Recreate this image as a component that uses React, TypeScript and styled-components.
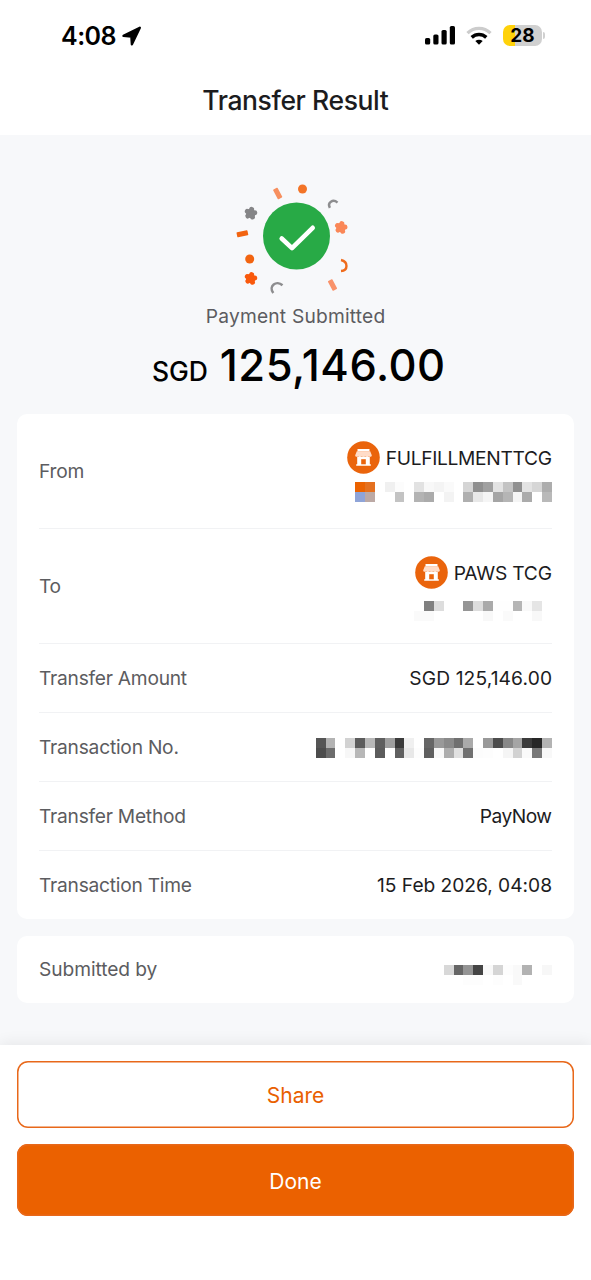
import React from "react";
import styled, { createGlobalStyle } from "styled-components";

const GlobalStyle = createGlobalStyle`
  * { box-sizing: border-box; }
  body { margin: 0; background: #fff; font-family: Inter, "Liberation Sans", sans-serif; }
`;

const Screen = styled.div`
  width: 591px;
  height: 1280px;
  display: flex;
  flex-direction: column;
  background: #f7f8fa;
  color: #1c1c1e;
  overflow: hidden;
`;

const Header = styled.header`
  height: 135px;
  background: #fff;
`;

const StatusBar = styled.div`
  height: 71px;
  padding: 0 46px 0 61px;
  display: flex;
  align-items: center;
  justify-content: space-between;
`;

const StatusGroup = styled.div<{ $gap: number }>`
  display: flex;
  align-items: center;
  gap: ${(p) => p.$gap}px;
`;

const Text = styled.span<{ $size: number; $weight?: number; $spacing?: number; $color?: string }>`
  font-size: ${(p) => p.$size}px;
  font-weight: ${(p) => p.$weight ?? 400};
  letter-spacing: ${(p) => p.$spacing ?? 0}px;
  margin-right: ${(p) => -(p.$spacing ?? 0)}px;
  color: ${(p) => p.$color ?? "#1c1c1e"};
  line-height: 1.2;
  white-space: nowrap;
`;

const Battery = styled.div`
  width: 39px;
  height: 21px;
  padding-top: 1px;
  border-radius: 7px;
  background: linear-gradient(90deg, #ffd20a 0 12px, #d0d0d0 12px);
  display: flex;
  align-items: center;
  justify-content: center;
`;

const BatteryTip = styled.div`
  width: 2px;
  height: 7px;
  border-radius: 0 2px 2px 0;
  background: #d0d0d0;
`;

const TitleBar = styled.div`
  height: 60px;
  display: flex;
  align-items: center;
  justify-content: center;
`;

const Summary = styled.section`
  height: 279px;
  padding-top: 45px;
  display: flex;
  flex-direction: column;
  align-items: center;
`;

const Status = styled.div`
  height: 26px;
  margin-top: 4px;
  display: flex;
  align-items: center;
`;

const Amount = styled.div`
  margin-top: 9px;
  padding-left: 6px;
  display: flex;
  align-items: baseline;
  gap: 12px;
`;

const Card = styled.section`
  margin: 0 17px 17px;
  padding: 0 22px;
  border-radius: 10px;
  background: #fff;
`;

const Row = styled.div<{ $height: number }>`
  height: ${(p) => p.$height}px;
  padding-top: 1px;
  display: flex;
  align-items: center;
  justify-content: space-between;
  & + & { border-top: 1px solid #f1f2f4; }
`;

const Party = styled.div<{ $gap: number }>`
  display: flex;
  flex-direction: column;
  align-items: flex-end;
  padding-top: ${(p) => p.$gap - 8}px;
  gap: ${(p) => p.$gap}px;
`;

const PartyName = styled.div`
  height: 33px;
  display: flex;
  align-items: center;
  gap: 6px;
  & > span { padding-top: 2px; }
`;

const MosaicGrid = styled.div<{ $cols: number; $drop: number }>`
  display: grid;
  grid-template-columns: repeat(${(p) => p.$cols}, 9.85px);
  grid-auto-rows: 10px;
  margin-top: ${(p) => p.$drop}px;
`;

const Cell = styled.i<{ $color: string }>`
  background: ${(p) => p.$color};
`;

const Footer = styled.footer`
  height: 235px;
  margin-top: auto;
  padding: 16px 17px 0;
  display: flex;
  flex-direction: column;
  gap: 16px;
  background: #fff;
  box-shadow: 0 -2px 14px rgba(0, 0, 0, 0.07);
`;

const Button = styled.button<{ $filled?: boolean }>`
  width: 100%;
  height: ${(p) => (p.$filled ? 72 : 67)}px;
  border: 0;
  box-shadow: inset 0 0 0 1.5px #e8681a;
  border-radius: 11px;
  background: ${(p) => (p.$filled ? "#eb6100" : "#fff")};
  font-family: inherit;
  padding: 3px 0 0;
  display: flex;
  align-items: center;
  justify-content: center;
`;

function Mosaic({ rows, drop = 0 }: { rows: string[]; drop?: number }) {
  const cells = rows.map((r) => r.split(" "));
  return (
    <MosaicGrid $cols={cells[0].length} $drop={drop}>
      {cells.flat().map((c, i) => (
        <Cell key={i} $color={c.length === 2 ? `#${c}${c}${c}` : `#${c}`} />
      ))}
    </MosaicGrid>
  );
}

function StoreIcon() {
  return (
    <svg width="33" height="33" viewBox="0 0 33 33">
      <circle cx="16.5" cy="16.5" r="16.3" fill="#ea640c" />
      <path d="M10.500 8h12v2.500h-12z" fill="#fff" />
      <path d="M9.800 10.200h13.400l1.600 4c0 1.600-2 2-3 .9-1.200 1.200-2.700 1-3.500 0-.9 1-2.700 1-3.600 0-.9 1-2.400 1.200-3.500 0-1.200 1.100-3 .7-3-.9z" fill="#ffdcc8" />
      <path d="M10.200 15.500h12.600v7.800h1v1.500H9.200v-1.500h1z" fill="#fff" />
      <path d="M14.200 18.200h4.600v5.100h-4.600z" fill="#ea640c" />
    </svg>
  );
}

function Flower({ x, y, color }: { x: number; y: number; color: string }) {
  return (
    <g transform={`translate(${x} ${y}) rotate(12)`} fill={color}>
      <circle r="4.700" />
      {[0, 72, 144, 216, 288].map((a) => (
        <circle key={a} cy="-4" r="2.500" transform={`rotate(${a})`} />
      ))}
    </g>
  );
}

function Celebration() {
  return (
    <svg width="120" height="120" viewBox="0 0 120 120">
      <circle cx="60.500" cy="56" r="33.5" fill="#28aa46" />
      <path d="M45.700 58.500L56 68.200 76.700 47.800" fill="none" stroke="#fff" strokeWidth="4.6" strokeLinecap="round" strokeLinejoin="round" />
      <rect x="-2.5" y="-5.5" width="5" height="11" rx=".7" fill="#f78f5e" transform="translate(41.700 13.5) rotate(-28)" />
      <circle cx="66.500" cy="9" r="4.5" fill="#f37427" />
      <path d="M93.900 27.800C91 22.500 97 18.500 101.500 22.600" fill="none" stroke="#8d8d8f" strokeWidth="2.500" />
      <Flower x={14.800} y={33.300} color="#858587" />
      <Flower x={105} y={47.500} color="#fa8757" />
      <rect x="-5.600" y="-2.500" width="11.200" height="5" rx=".7" fill="#f26410" transform="translate(6.400 53.800) rotate(-12)" />
      <circle cx="13.700" cy="79" r="4.500" fill="#f26410" />
      <Flower x={14.800} y={98.500} color="#f9590c" />
      <path d="M105 80C112.300 81.500 112.300 90.500 105 91" fill="none" stroke="#ef6b1c" strokeWidth="2.400" />
      <path d="M37.300 113C32 106 40.500 100 46.500 105.300" fill="none" stroke="#8d8d8f" strokeWidth="2.500" />
      <rect x="-2.500" y="-5.500" width="5" height="11" rx=".7" fill="#f9926a" transform="translate(96.500 105) rotate(-28)" />
    </svg>
  );
}

const LABEL = "#5c5c60";

function DetailRow({ label, spacing, height, children }: { label: string; spacing: number; height: number; children: React.ReactNode }) {
  return (
    <Row $height={height}>
      <Text $size={19.2} $spacing={spacing} $color={LABEL}>{label}</Text>
      {children}
    </Row>
  );
}

export default function App() {
  return (
    <Screen>
      <GlobalStyle />
      <Header>
        <StatusBar>
          <StatusGroup $gap={5}>
            <Text $size={25} $weight={600} $spacing={-0.500} $color="#000">4:08</Text>
            <svg width="20" height="20" viewBox="0 0 20 20">
              <path d="M1.500 9.800L17.800 1.700 9.900 18.300 9.400 10.600z" fill="#000" stroke="#000" strokeWidth="2.400" strokeLinejoin="round" />
            </svg>
          </StatusGroup>
          <StatusGroup $gap={11}>
            <svg width="30" height="20" viewBox="0 0 30 20">
              <rect x="0" y="12" width="5.200" height="6.500" rx="1.600" />
              <rect x="8.300" y="8.500" width="5.200" height="10" rx="1.600" />
              <rect x="16.500" y="4" width="5.200" height="14.500" rx="1.600" />
              <rect x="24.800" y="0" width="5.200" height="18.500" rx="1.600" />
            </svg>
            <svg width="26" height="20" viewBox="0 0 26 20">
              <path d="M1.500 7.200C8 .7 18 .7 24.500 7.200" fill="none" stroke="#ccc" strokeWidth="3.200" />
              <path d="M5.700 11.400C10 7.500 16 7.500 20.300 11.400" fill="none" stroke="#000" strokeWidth="3.500" />
              <path d="M9.300 15C11.500 13.200 14.500 13.200 16.700 15L13 18.800z" />
            </svg>
            <StatusGroup $gap={1}>
              <Battery><Text $size={19} $weight={700} $color="#000">28</Text></Battery>
              <BatteryTip />
            </StatusGroup>
          </StatusGroup>
        </StatusBar>
        <TitleBar><Text $size={26.500} $weight={500} $spacing={-0.400}>Transfer Result</Text></TitleBar>
      </Header>

      <Summary>
        <Celebration />
        <Status><Text $size={19.200} $spacing={0.200} $color={LABEL}>Payment Submitted</Text></Status>
        <Amount>
          <Text $size={26.500} $weight={450} $spacing={-0.100} $color="#000">SGD</Text>
          <Text $size={43.500} $weight={500} $spacing={0.500} $color="#000">125,146.00</Text>
        </Amount>
      </Summary>

      <Card>
        <DetailRow label="From" spacing={-0.200} height={114}>
          <Party $gap={8}>
            <PartyName><StoreIcon /><Text $size={19.200} $spacing={-0.320}>FULFILLMENTTCG</Text></PartyName>
            <Mosaic rows={[
              "eb6200 e4701f ff f0 fc ff e2 f8 f4 fa ff d5 8f a0 e3 c3 90 e3 d6 ad",
              "8fa4d8 bca9a5 ff ff c3 ff b3 ab ff f3 ff af e8 f5 a5 b5 f5 ab ff b9",
            ]} />
          </Party>
        </DetailRow>
        <DetailRow label="To" spacing={-0.300} height={115}>
          <Party $gap={12}>
            <PartyName><StoreIcon /><Text $size={19.200} $spacing={-0.200}>PAWS TCG</Text></PartyName>
            <Mosaic rows={[
              "ff 80 dd ff ff 95 dd aa fe fe b5 f9 e5 ff",
              "fa fa ff ff ff ff ff f8 ff fa ff ff f8 ff",
            ]} />
          </Party>
        </DetailRow>
        <DetailRow label="Transfer Amount" spacing={-0.250} height={69}>
          <Text $size={19.200} $spacing={0.120}>SGD 125,146.00</Text>
        </DetailRow>
        <DetailRow label="Transaction No." spacing={-0.230} height={69}>
          <Mosaic drop={1} rows={[
            "55 b3 ff d2 5c b8 5f a0 3b f0 ff 66 99 8a 70 aa ff 99 4c 88 a5 3b 26 b3",
            "4c 6c ff f7 b7 ff 5c ff 60 e8 fd 5f f8 ad e0 70 fc fd ff f5 d2 fa 78 f8",
          ]} />
        </DetailRow>
        <DetailRow label="Transfer Method" spacing={-0.250} height={69}>
          <Text $size={19.200} $spacing={-0.550}>PayNow</Text>
        </DetailRow>
        <DetailRow label="Transaction Time" spacing={-0.250} height={69}>
          <Text $size={19.200} $spacing={-0.030}>15 Feb 2026, 04:08</Text>
        </DetailRow>
      </Card>

      <Card>
        <DetailRow label="Submitted by" spacing={-0.080} height={67}>
          <Mosaic drop={9} rows={[
            "d8 66 94 44 f9 d5 fd f9 b2 ff f7",
            "ff ff fd fd ff fd ff f9 ff ff ff",
          ]} />
        </DetailRow>
      </Card>

      <Footer>
        <Button><Text $size={21} $color="#e96000">Share</Text></Button>
        <Button $filled><Text $size={21} $color="#fff">Done</Text></Button>
      </Footer>
    </Screen>
  );
}
